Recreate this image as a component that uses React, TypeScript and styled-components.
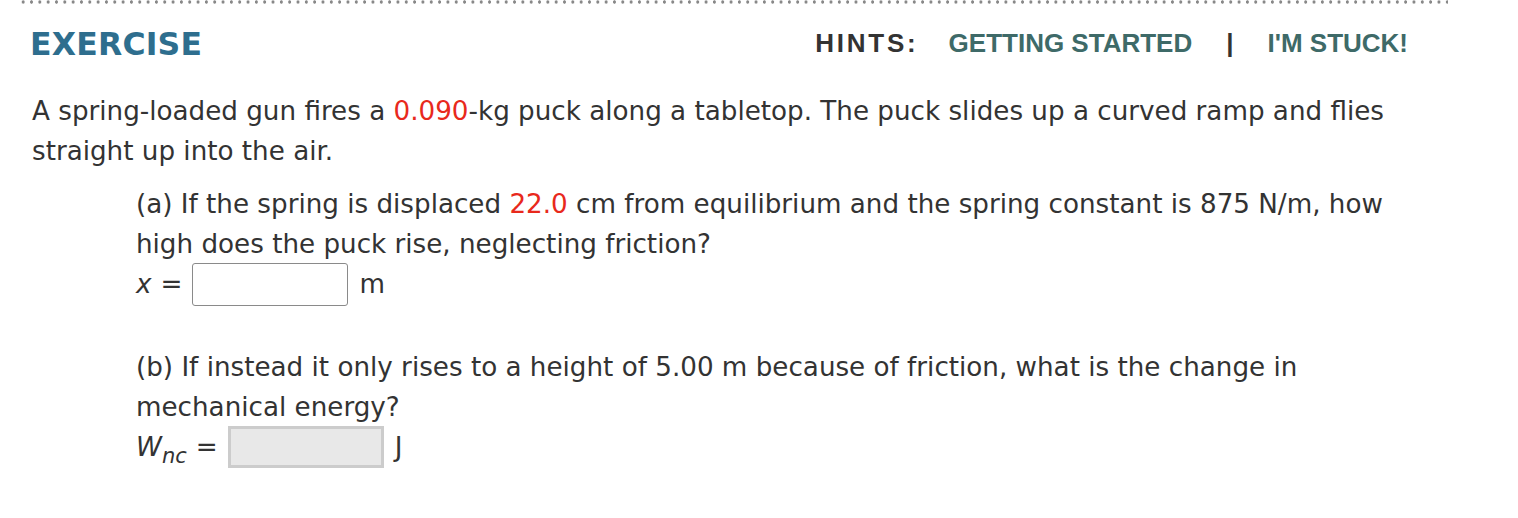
import styled, { createGlobalStyle } from "styled-components";

const GlobalStyle = createGlobalStyle`
  html, body {
    margin: 0;
    padding: 0;
    background: #fff;
  }
  body {
    font-family: "DejaVu Sans", Verdana, sans-serif;
    color: #333;
  }
`;

const Page = styled.div`
  width: 1429px;
  padding: 0 0 40px 19px;
`;

const DottedRule = styled.div`
  height: 4px;
  background-image: radial-gradient(circle at center, #888 1.4px, transparent 1.9px);
  background-size: 8.33px 4px;
  background-repeat: repeat-x;
`;

const Header = styled.header`
  display: flex;
  align-items: center;
  justify-content: space-between;
  height: 79px;
  padding: 0 40px 0 11px;
`;

const Title = styled.h1`
  margin: 0;
  font-family: "DejaVu Sans", Verdana, sans-serif;
  font-weight: 700;
  font-size: 31.5px;
  color: #2e6e8e;
  letter-spacing: 0.2px;
`;

const Hints = styled.nav`
  display: flex;
  align-items: center;
  font-family: "Liberation Sans", Arial, sans-serif;
  font-weight: 700;
  font-size: 26px;
`;

const HintsLabel = styled.span`
  color: #333;
  letter-spacing: 2.8px;
  margin-right: 30px;
`;

const HintLink = styled.a`
  color: #3e6a68;
  text-decoration: none;
`;

const Divider = styled.span`
  color: #333;
  margin: 0 34px;
`;

const Problem = styled.p`
  margin: 8px 0 0 13px;
  width: 1385px;
  font-size: 26.2px;
  line-height: 40px;
`;

const Given = styled.span`
  color: #e8291c;
`;

const Part = styled.section<{ $top: number }>`
  margin: ${(p) => p.$top}px 0 0 117px;
  font-size: 26.2px;
  line-height: 40px;
`;

const Question = styled.p`
  margin: 0;
  width: 1275px;
`;

const AnswerRow = styled.div`
  display: flex;
  align-items: center;
  height: 42px;
  margin-top: -1px;
`;

const Variable = styled.span`
  font-style: italic;
`;

const Sub = styled.sub`
  font-style: italic;
  font-size: 21px;
  position: relative;
  top: 7px;
  line-height: 0;
  vertical-align: baseline;
`;

const Equals = styled.span<{ $left: number; $right: number }>`
  margin: 0 ${(p) => p.$right}px 0 ${(p) => p.$left}px;
`;

const AnswerBox = styled.input<{ $disabled?: boolean }>`
  box-sizing: border-box;
  width: 156px;
  height: ${(p) => (p.$disabled ? 42 : 43)}px;
  margin: 0;
  padding: 0 6px;
  font: inherit;
  border: ${(p) => (p.$disabled ? "3px solid #cccccc" : "1px solid #8a8a8a")};
  border-radius: ${(p) => (p.$disabled ? 0 : 3)}px;
  background: ${(p) => (p.$disabled ? "#e8e8e8" : "#fff")};
  outline: none;
`;

const Unit = styled.span`
  margin-left: 11px;
`;

export default function App() {
  return (
    <Page>
      <GlobalStyle />
      <DottedRule />
      <Header>
        <Title>EXERCISE</Title>
        <Hints>
          <HintsLabel>HINTS:</HintsLabel>
          <HintLink href="#">GETTING STARTED</HintLink>
          <Divider>|</Divider>
          <HintLink href="#">I'M STUCK!</HintLink>
        </Hints>
      </Header>
      <Problem>
        A spring-loaded gun fires a <Given>0.090</Given>-kg puck along a tabletop. The puck
        slides up a curved ramp and flies straight up into the air.
      </Problem>
      <Part $top={13}>
        <Question>
          (a) If the spring is displaced <Given>22.0</Given> cm from equilibrium and the spring
          constant is 875 N/m, how high does the puck rise, neglecting friction?
        </Question>
        <AnswerRow>
          <Variable>x</Variable>
          <Equals $left={9} $right={10}>=</Equals>
          <AnswerBox type="text" />
          <Unit>m</Unit>
        </AnswerRow>
      </Part>
      <Part $top={42}>
        <Question>
          (b) If instead it only rises to a height of 5.00 m because of friction, what is the
          change in mechanical energy?
        </Question>
        <AnswerRow>
          <Variable>
            W<Sub>nc</Sub>
          </Variable>
          <Equals $left={9} $right={10}>=</Equals>
          <AnswerBox type="text" $disabled disabled />
          <Unit>J</Unit>
        </AnswerRow>
      </Part>
    </Page>
  );
}
